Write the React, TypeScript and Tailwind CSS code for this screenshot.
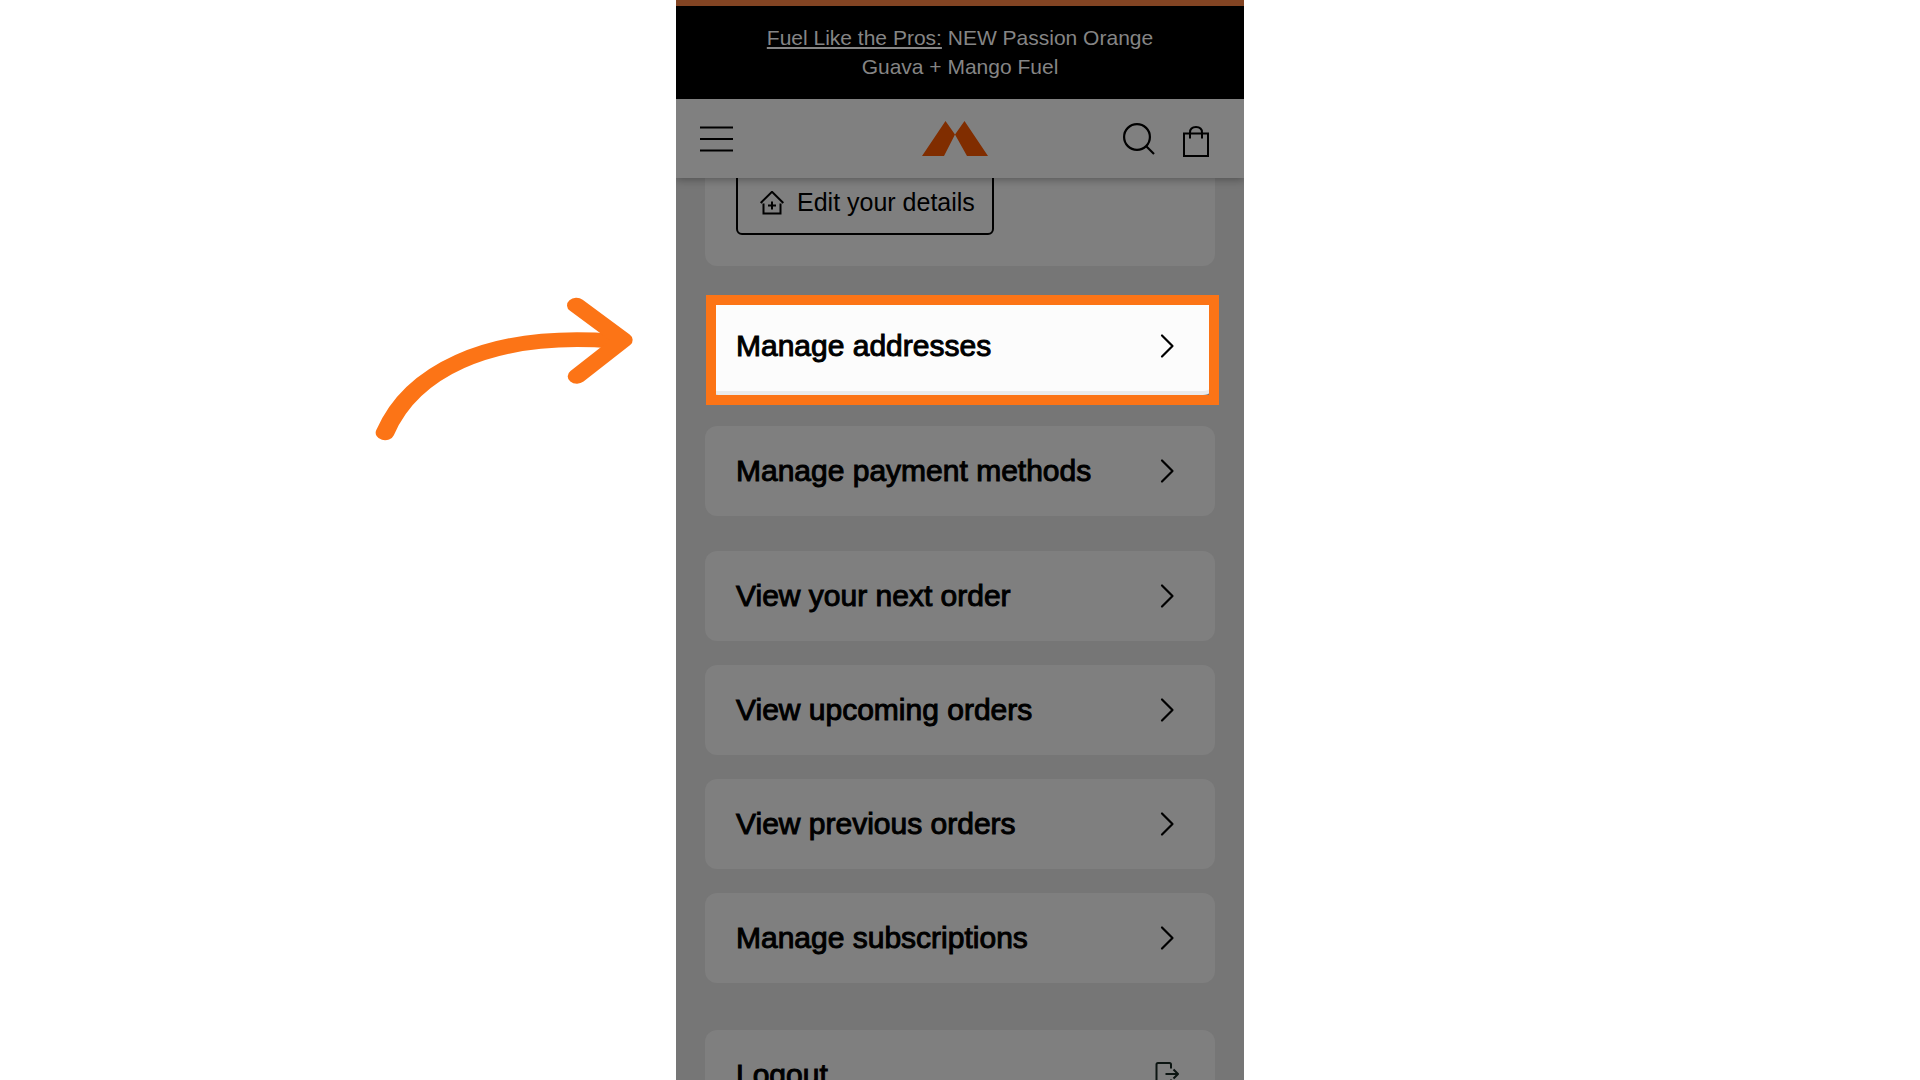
import clsx from "clsx";

type RowProps = {
  label: string;
  className?: string;
  highlighted?: boolean;
  icon?: "chevron" | "logout";
};

const ChevronIcon = () => (
  <svg width="24" height="26" viewBox="0 0 24 26" fill="none" stroke="currentColor" aria-hidden="true">
    <path strokeLinecap="round" strokeLinejoin="round" strokeWidth="2.2" d="M7 2.5L17.5 13L7 23.5" />
  </svg>
);

const LogoutIcon = () => (
  <svg width="24" height="26" viewBox="0 0 24 26" fill="none" stroke="#0c1512" aria-hidden="true">
    <path
      strokeLinejoin="round"
      strokeWidth="2"
      d="M16 6.5V2.5Q16 1 14.500 1H3Q1.500 1 1.500 2.500V21.500Q1.500 23 3 23H14.500Q16 23 16 21.500V17.500M10.500 12H23M18.500 7.500L23 12L18.500 16.500"
    />
  </svg>
);

const HomeIcon = () => (
  <svg width="24" height="24" viewBox="0 0 24 24" fill="none" stroke="currentColor" aria-hidden="true">
    <path
      strokeWidth="2"
      d="M0.700 12L12 0.800L23.300 12M3.500 12.500V22.500H20.500V12.500M12 10.500V18.500M8 14.500H16"
    />
  </svg>
);

const Logo = () => (
  <svg width="66" height="35" viewBox="0 0 66 35" fill="#802d00" aria-hidden="true">
    <path d="M0 35L23.500 0L33 13.500L22 35ZM33 13.500L42.500 0L66 35H45Z" />
  </svg>
);

function Row({ label, className, highlighted, icon = "chevron" }: RowProps) {
  return (
    <li className={clsx("relative", className)}>
      <a
        href="#"
        className={clsx(
          "flex h-[90px] items-center justify-between rounded-xl pr-9",
          highlighted ? "ml-px bg-[#fcfcfc] pl-[30px] shadow-[0_4px_0_#ebebeb]" : "bg-[#7f7f7f] pl-[31px]"
        )}
      >
        <span className="text-[30px] leading-9 [-webkit-text-stroke:1px_black]">{label}</span>
        {icon === "logout" ? <LogoutIcon /> : <ChevronIcon />}
      </a>
      {highlighted && (
        <div className="pointer-events-none absolute -top-1.5 -right-1 -bottom-3.5 left-px border-10 border-[#fc7416]" />
      )}
    </li>
  );
}

function Header() {
  return (
    <header className="relative z-10 grid h-[79px] grid-cols-[1fr_auto_1fr] items-center bg-[#808080] pr-[35px] pl-6 shadow-[0_2px_8px_rgba(0,0,0,0.3)]">
      <button type="button" aria-label="Menu" className="justify-self-start">
        <svg width="33" height="26" viewBox="0 0 33 26" stroke="currentColor" strokeWidth="2.2">
          <path d="M0 1.500H33M0 13H33M0 24.500H33" />
        </svg>
      </button>
      <a href="#" aria-label="Home">
        <Logo />
      </a>
      <div className="flex items-center gap-7 justify-self-end">
        <button type="button" aria-label="Search">
          <svg width="32" height="32" viewBox="0 0 32 32" fill="none" stroke="currentColor" strokeWidth="2.2">
            <circle cx="14" cy="14" r="12.9" />
            <path d="M23 23L31 31" />
          </svg>
        </button>
        <button type="button" aria-label="Cart">
          <svg width="26" height="37" viewBox="0 0 26 37" fill="none" stroke="currentColor" strokeWidth="2">
            <path d="M1 13.500H25V36H1ZM7 18.500V12.500Q7 7 13 7T19 12.500V18.500" />
          </svg>
        </button>
      </div>
    </header>
  );
}

export default function App() {
  return (
    <div className="flex h-screen justify-center bg-white font-['Liberation_Sans',Arial,sans-serif] text-black">
      <div className="relative w-full max-w-[568px]">
        <div className="flex h-full flex-col overflow-hidden border-t-6 border-[#824423] bg-[#767676]">
          <p className="shrink-0 bg-black px-20 pt-[17px] pb-[18px] text-center text-[21px] leading-[29px] text-[#858585]">
            <a href="#" className="underline underline-offset-2">
              Fuel Like the Pros:
            </a>{" "}
            NEW Passion Orange Guava + Mango Fuel
          </p>
          <Header />
          <main className="min-h-0 flex-1 overflow-hidden px-[29px]">
            <section className="rounded-b-xl bg-[#7f7f7f] pb-[31px] pl-[31px]">
              <button
                type="button"
                className="-mt-[7px] flex h-16 w-[258px] items-center gap-[13px] rounded-md border-2 border-black pl-[22px] text-[25px] whitespace-nowrap"
              >
                <HomeIcon />
                Edit your details
              </button>
            </section>
            <ul>
              <Row label="Manage addresses" className="mt-[35px]" highlighted />
              <Row label="Manage payment methods" className="mt-[35px]" />
              <Row label="View your next order" className="mt-[35px]" />
              <Row label="View upcoming orders" className="mt-6" />
              <Row label="View previous orders" className="mt-6" />
              <Row label="Manage subscriptions" className="mt-6" />
              <Row label="Logout" className="mt-[47px]" icon="logout" />
            </ul>
          </main>
        </div>
        {/* pointer to the highlighted row */}
        <svg
          className="pointer-events-none absolute top-[280px] right-full mr-[-24px]"
          width="340"
          height="180"
          viewBox="0 0 1020 540"
          fill="none"
          stroke="#fc7416"
          aria-hidden="true"
        >
          <g transform="scale(1 0.8)" strokeWidth="56" strokeLinecap="round" strokeLinejoin="round">
            <path d="M75 573C150 356 370 192 760 229" />
            <path d="M649 95L790 225L651 361" />
          </g>
        </svg>
      </div>
    </div>
  );
}
